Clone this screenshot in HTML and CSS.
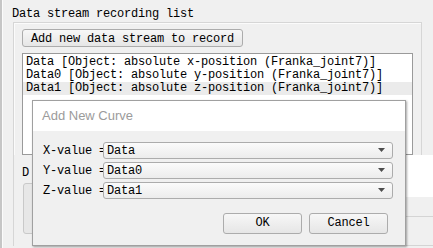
FILE: index.html
```html
<!DOCTYPE html>
<html>
<head>
<meta charset="utf-8">
<link rel="stylesheet" href="styles.css">
</head>
<body>
<div class="window">
  <div class="title">Data stream recording list</div>
  <div class="group">
    <button class="btn add-btn">Add new data stream to record</button>
    <div class="list">
      <div class="row">Data [Object: absolute x-position (Franka_joint7)]</div>
      <div class="row">Data0 [Object: absolute y-position (Franka_joint7)]</div>
      <div class="row sel">Data1 [Object: absolute z-position (Franka_joint7)]</div>
    </div>
  </div>
  <div class="lower">
    <div class="lower-left">
      <div class="lower-label">D</div>
      <div class="lower-box"></div>
    </div>
    <div class="lower-right">
      <div class="white-panel"></div>
      <div class="rule first"></div>
      <div class="rule second"></div>
    </div>
  </div>
</div>

<div class="dialog">
  <div class="dlg-title">Add New Curve</div>
  <div class="dlg-body">
    <div class="field">
      <span class="field-label">X-value =</span>
      <div class="combo"><span class="combo-text">Data</span><svg class="arrow" width="7" height="4" viewBox="0 0 7 4"><path d="M0 0H7L3.5 4Z" fill="#4d4d4d"/></svg></div>
    </div>
    <div class="field">
      <span class="field-label">Y-value =</span>
      <div class="combo"><span class="combo-text">Data0</span><svg class="arrow" width="7" height="4" viewBox="0 0 7 4"><path d="M0 0H7L3.5 4Z" fill="#4d4d4d"/></svg></div>
    </div>
    <div class="field">
      <span class="field-label">Z-value =</span>
      <div class="combo"><span class="combo-text">Data1</span><svg class="arrow" width="7" height="4" viewBox="0 0 7 4"><path d="M0 0H7L3.5 4Z" fill="#4d4d4d"/></svg></div>
    </div>
    <div class="actions">
      <button class="btn dlg-btn">OK</button>
      <button class="btn dlg-btn">Cancel</button>
    </div>
  </div>
</div>
</body>
</html>
```
FILE: styles.css
```css
html, body {
  margin: 0;
  padding: 0;
}
body {
  width: 433px;
  height: 248px;
  overflow: hidden;
  background: #f0f0f0;
  font-family: "Liberation Mono", monospace;
  font-size: 12px;
  letter-spacing: -0.2px;
  color: #000;
  position: relative;
}
.window {
  height: 248px;
  box-sizing: border-box;
  border-left: 2px solid #c6c6c6;
  box-shadow: inset 1px 0 #fbfbfb;
  padding: 7px 0 0 10px;
}
.title {
  line-height: 14px;
  height: 14px;
  white-space: nowrap;
}
.group {
  margin: 1px 0 0 1px;
  width: 409px;
  box-sizing: border-box;
  border: 1px solid #d6d6d6;
  border-bottom: none;
  box-shadow: inset 1px 1px #fbfbfb;
  padding: 6px 8px 0 8px;
}
.btn {
  font-family: "Liberation Mono", monospace;
  font-size: 12px;
  letter-spacing: -0.2px;
  color: #000;
  border: 1px solid #acacac;
  border-radius: 3px;
  background: linear-gradient(#f7f7f7, #e6e6e6);
  box-sizing: border-box;
  margin: 0;
  white-space: nowrap;
}
.add-btn {
  display: block;
  height: 18px;
  padding: 3px 8px 0 8px;
  line-height: 13px;
  text-align: left;
}
.list {
  margin-top: 6px;
  width: 391px;
  height: 102px;
  box-sizing: border-box;
  border: 1px solid #9a9a9a;
  background: #fff;
  padding-top: 2px;
}
.row {
  line-height: 13px;
  height: 13px;
  padding-left: 3px;
  white-space: nowrap;
}
.row.sel {
  background: #ebebeb;
}
.lower {
  display: flex;
  justify-content: space-between;
  margin-left: 1px;
  border-left: 1px solid #d6d6d6;
}
.lower-left {
  padding-left: 8px;
}
.lower-label {
  margin-top: 11px;
  line-height: 14px;
  height: 14px;
}
.lower-box {
  margin: 3px 0 0 1px;
  width: 200px;
  height: 51px;
  box-sizing: border-box;
  border: 1px solid #c9c9c9;
  border-radius: 3px;
  background: #e7e7e7;
}
.lower-right {
  width: 120px;
}
.white-panel {
  height: 42px;
  background: #fff;
}
.rule {
  border-top: 1px solid #d4d4d4;
}
.rule.first {
  margin-top: 19px;
}
.rule.second {
  margin-top: 28px;
}

.dialog {
  position: absolute;
  left: 32px;
  top: 100px;
  width: 374px;
  height: 146px;
  box-sizing: border-box;
  border: 1px solid #a0a0a0;
  background: #f0f0f0;
  box-shadow: 1px 1px 2px rgba(0, 0, 0, 0.35);
}
.dlg-title {
  height: 30px;
  line-height: 30px;
  background: #fff;
  padding-left: 9px;
  font-family: "Liberation Sans", sans-serif;
  font-size: 13px;
  letter-spacing: 0;
  color: #9b9b9b;
}
.dlg-body {
  padding: 11px 17px 0 10px;
}
.field {
  display: flex;
  height: 17px;
  margin-bottom: 3px;
}
.field-label {
  width: 60px;
  flex: none;
  height: 17px;
  box-sizing: border-box;
  white-space: pre;
  padding-top: 2px;
  line-height: 15px;
}
.combo {
  width: 290px;
  flex: none;
  height: 17px;
  box-sizing: border-box;
  border: 1px solid #acacac;
  border-radius: 3px;
  background: linear-gradient(#fbfbfb, #ececec);
  display: flex;
  align-items: flex-start;
}
.combo-text {
  padding: 1px 0 0 3px;
  line-height: 15px;
  white-space: nowrap;
}
.arrow {
  margin: 5px 7px 0 auto;
  display: block;
}
.actions {
  display: flex;
  justify-content: flex-end;
  gap: 7px;
  margin-top: 14px;
}
.dlg-btn {
  width: 79px;
  height: 21px;
  line-height: 19px;
  padding: 0;
  text-align: center;
}
```
